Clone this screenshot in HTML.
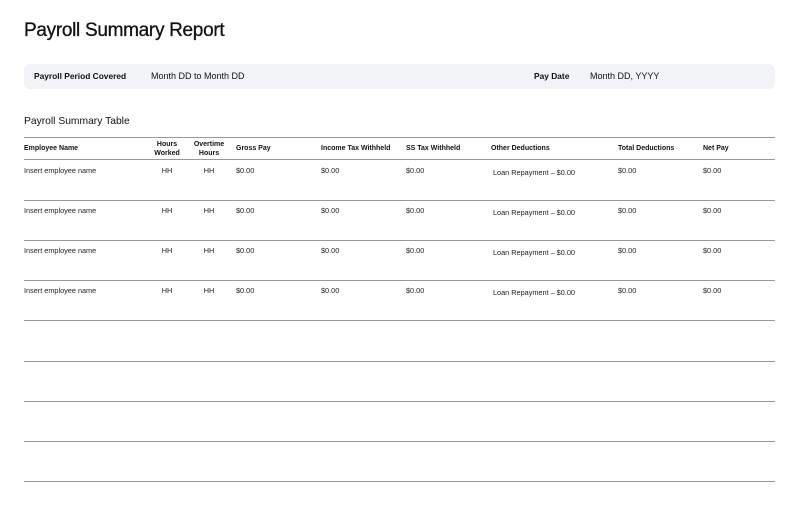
<!DOCTYPE html>
<html><head><style>
body{margin:0;width:800px;height:523px;background:#fff;font-family:"Liberation Sans",sans-serif;color:#111;position:relative;overflow:hidden}
.a{position:absolute;white-space:nowrap}
.t{font-size:19px;left:24px;top:20px;letter-spacing:-0.3px;-webkit-text-stroke:0.3px #111}
.box{position:absolute;left:24px;top:64px;width:751px;height:25px;background:#f2f3f6;border-radius:6px}
.l{position:absolute;left:24px;width:751px;height:1px;background:#999}
.h{font-size:7px;font-weight:bold}
.c{font-size:7.3px;color:#222}
.ctr{text-align:center;transform:translateX(-50%)}
</style></head><body>
<div class="a t">Payroll Summary Report</div>
<div class="box"></div>
<div class="a" style="left:34px;top:71px;font-size:8.4px;font-weight:bold">Payroll Period Covered</div>
<div class="a" style="left:151px;top:71px;font-size:9px">Month DD to Month DD</div>
<div class="a" style="left:534px;top:71px;font-size:8.4px;font-weight:bold">Pay Date</div>
<div class="a" style="left:590px;top:71px;font-size:9px">Month DD, YYYY</div>
<div class="a" style="left:24px;top:116px;font-size:10.3px">Payroll Summary Table</div>
<div class="l" style="top:137px"></div>
<div class="a h" style="left:24px;top:145px">Employee Name</div>
<div class="a h ctr" style="left:167px;top:140px;line-height:9px">Hours<br>Worked</div>
<div class="a h ctr" style="left:209px;top:140px;line-height:9px">Overtime<br>Hours</div>
<div class="a h" style="left:236px;top:145px">Gross Pay</div>
<div class="a h" style="left:321px;top:145px">Income Tax Withheld</div>
<div class="a h" style="left:406px;top:145px">SS Tax Withheld</div>
<div class="a h" style="left:491px;top:145px">Other Deductions</div>
<div class="a h" style="left:618px;top:145px">Total Deductions</div>
<div class="a h" style="left:703px;top:145px">Net Pay</div>
<div class="l" style="top:159px"></div>
<div class="l" style="top:200px"></div>
<div class="l" style="top:240px"></div>
<div class="l" style="top:280px"></div>
<div class="l" style="top:320px"></div>
<div class="l" style="top:361px"></div>
<div class="l" style="top:401px"></div>
<div class="l" style="top:441px"></div>
<div class="l" style="top:481px"></div>
<div class="a c" style="left:24px;top:166px">Insert employee name</div><div class="a c ctr" style="left:167px;top:166px">HH</div><div class="a c ctr" style="left:209px;top:166px">HH</div><div class="a c" style="left:236px;top:166px">$0.00</div><div class="a c" style="left:321px;top:166px">$0.00</div><div class="a c" style="left:406px;top:166px">$0.00</div><div class="a c" style="left:493px;top:168px">Loan Repayment – $0.00</div><div class="a c" style="left:618px;top:166px">$0.00</div><div class="a c" style="left:703px;top:166px">$0.00</div>
<div class="a c" style="left:24px;top:206px">Insert employee name</div><div class="a c ctr" style="left:167px;top:206px">HH</div><div class="a c ctr" style="left:209px;top:206px">HH</div><div class="a c" style="left:236px;top:206px">$0.00</div><div class="a c" style="left:321px;top:206px">$0.00</div><div class="a c" style="left:406px;top:206px">$0.00</div><div class="a c" style="left:493px;top:208px">Loan Repayment – $0.00</div><div class="a c" style="left:618px;top:206px">$0.00</div><div class="a c" style="left:703px;top:206px">$0.00</div>
<div class="a c" style="left:24px;top:246px">Insert employee name</div><div class="a c ctr" style="left:167px;top:246px">HH</div><div class="a c ctr" style="left:209px;top:246px">HH</div><div class="a c" style="left:236px;top:246px">$0.00</div><div class="a c" style="left:321px;top:246px">$0.00</div><div class="a c" style="left:406px;top:246px">$0.00</div><div class="a c" style="left:493px;top:248px">Loan Repayment – $0.00</div><div class="a c" style="left:618px;top:246px">$0.00</div><div class="a c" style="left:703px;top:246px">$0.00</div>
<div class="a c" style="left:24px;top:286px">Insert employee name</div><div class="a c ctr" style="left:167px;top:286px">HH</div><div class="a c ctr" style="left:209px;top:286px">HH</div><div class="a c" style="left:236px;top:286px">$0.00</div><div class="a c" style="left:321px;top:286px">$0.00</div><div class="a c" style="left:406px;top:286px">$0.00</div><div class="a c" style="left:493px;top:288px">Loan Repayment – $0.00</div><div class="a c" style="left:618px;top:286px">$0.00</div><div class="a c" style="left:703px;top:286px">$0.00</div>
</body></html>
